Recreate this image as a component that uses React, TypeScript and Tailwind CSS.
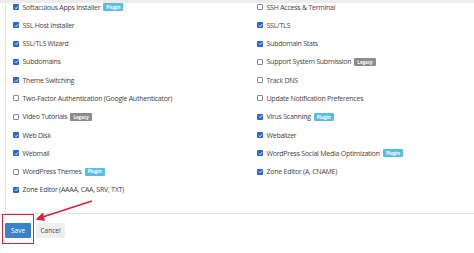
const rows: [Item, Item | null][] = [];

type Item = { label: string; checked: boolean; badge?: 'Plugin' | 'Legacy' };

const left: Item[] = [
  { label: 'Softaculous Apps Installer', checked: true, badge: 'Plugin' },
  { label: 'SSL Host Installer', checked: true },
  { label: 'SSL/TLS Wizard', checked: true },
  { label: 'Subdomains', checked: true },
  { label: 'Theme Switching', checked: true },
  { label: 'Two-Factor Authentication (Google Authenticator)', checked: false },
  { label: 'Video Tutorials', checked: false, badge: 'Legacy' },
  { label: 'Web Disk', checked: true },
  { label: 'Webmail', checked: true },
  { label: 'WordPress Themes', checked: false, badge: 'Plugin' },
  { label: 'Zone Editor (AAAA, CAA, SRV, TXT)', checked: true },
];

const right: (Item | null)[] = [
  { label: 'SSH Access & Terminal', checked: false },
  { label: 'SSL/TLS', checked: true },
  { label: 'Subdomain Stats', checked: true },
  { label: 'Support System Submission', checked: false, badge: 'Legacy' },
  { label: 'Track DNS', checked: false },
  { label: 'Update Notification Preferences', checked: false },
  { label: 'Virus Scanning', checked: true, badge: 'Plugin' },
  { label: 'Webalizer', checked: true },
  { label: 'WordPress Social Media Optimization', checked: true, badge: 'Plugin' },
  { label: 'Zone Editor (A, CNAME)', checked: true },
  null,
];

left.forEach((item, i) => rows.push([item, right[i]]));

function Box({ checked }: { checked: boolean }) {
  if (!checked) {
    return <span className="block w-[6px] h-[6px] rounded-[1px] border border-[#8a8a8a] bg-white shrink-0" />;
  }
  return (
    <span className="flex items-center justify-center w-[6px] h-[6px] rounded-[1px] bg-[#2866d8] shrink-0">
      <svg width="5" height="5" viewBox="0 0 10 10">
        <path d="M2 5.2 L4.2 7.4 L8.2 2.6" stroke="white" strokeWidth="1.8" fill="none" />
      </svg>
    </span>
  );
}

function Row({ item }: { item: Item | null }) {
  if (!item) return <div />;
  return (
    <div className="flex items-center h-[8px] gap-[3px]">
      <Box checked={item.checked} />
      <span className="text-[#444] whitespace-nowrap ml-[0.5px] tracking-[-0.25px]">{item.label}</span>
      {item.badge && (
        <span
          className={`text-white text-[4.5px] font-bold leading-none px-[3px] h-[8px] flex items-center rounded-[1px] ${
            item.badge === 'Plugin' ? 'bg-[#57bde3]' : 'bg-[#8c8c8c]'
          }`}
        >
          {item.badge}
        </span>
      )}
    </div>
  );
}

export default function App() {
  return (
    <div
      className="relative w-[474px] h-[253px] bg-white overflow-hidden text-[7px] leading-none"
      style={{ fontFamily: '"Open Sans", "Liberation Sans", sans-serif' }}
    >
      <div className="h-[3px] bg-[#ececec]" />

      {/* Feature list */}
      <div className="ml-[5px] border-l border-[#e4e4e4] pl-[7px] pb-[9px]">
        <div className="grid grid-cols-[244px_1fr] auto-rows-[18.3px]">
          {rows.map(([l, r], i) => (
            <div key={i} className="contents">
              <Row item={l} />
              <Row item={r} />
            </div>
          ))}
        </div>
      </div>

      <div className="ml-[5px] border-t border-[#e2e2e2]" />

      {/* Actions */}
      <div className="flex gap-[5px] pl-[5px] pt-[9px]">
        <button className="w-[26px] h-[15px] bg-[#3b82c8] text-white text-[6.5px] rounded-[1px]">Save</button>
        <button className="w-[29px] h-[15px] bg-[#efefef] text-[#444] text-[6.5px] rounded-[1px]">Cancel</button>
      </div>

      {/* Annotation */}
      <div className="absolute left-[2px] top-[214px] w-[32px] h-[30px] border-[1.5px] border-[#d9223a]" />
      <svg className="absolute left-0 top-0" width="474" height="253">
        <line x1="92" y1="201" x2="41" y2="217.5" stroke="#d9223a" strokeWidth="1.5" />
        <path d="M35.5 219.5 L43 212.5 L45 221 Z" fill="#d9223a" />
      </svg>
    </div>
  );
}
